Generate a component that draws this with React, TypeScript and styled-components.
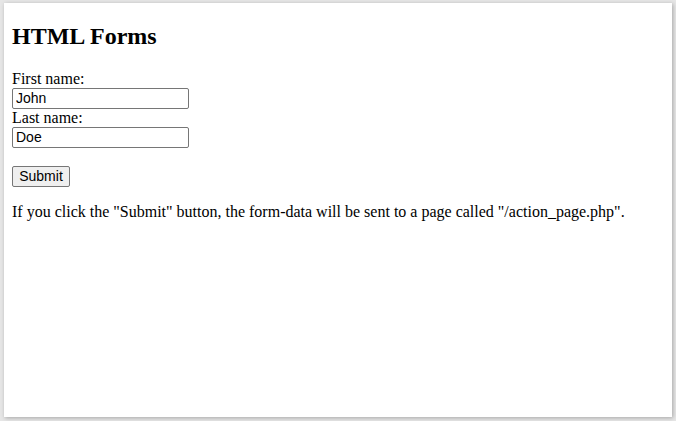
import React from "react";
import styled, { createGlobalStyle } from "styled-components";

const Global = createGlobalStyle`
  html, body { margin: 0; padding: 0; background: #e6e6e6; }
  * { box-sizing: border-box; }
`;

const Page = styled.div`
  width: 676px;
  height: 421px;
  padding: 3px 4px 4px 4px;
  background: #e6e6e6;
`;

const Sheet = styled.div`
  width: 668px;
  height: 414px;
  background: #ffffff;
  box-shadow: 1px 1px 4px rgba(0, 0, 0, 0.28);
  padding: 0 8px;
  overflow: hidden;
  font-family: "Liberation Serif", "Times New Roman", serif;
  font-size: 16px;
  color: #000;
  display: flow-root;
`;

const Title = styled.h2`
  font-size: 24px;
  font-weight: bold;
  margin: 19.92px 0;
`;

const Form = styled.form`
  margin: 0;
`;

const FieldLabel = styled.label``;

const TextInput = styled.input`
  width: 177px;
  height: 21px;
  padding: 1px 3px;
  border: 1px solid #767676;
  border-radius: 2px;
  font-family: "Liberation Sans", Arial, sans-serif;
  font-size: 14px;
  color: #000;
  background: #fff;
  margin: 0;
`;

const SubmitButton = styled.input`
  width: 58px;
  height: 21px;
  padding: 1px 0;
  border: 1px solid #767676;
  border-radius: 2px;
  background: #efefef;
  font-family: "Liberation Sans", Arial, sans-serif;
  font-size: 14px;
  color: #000;
  margin: 0;
  text-align: center;
`;

const Note = styled.p`
  margin: 16px 0;
`;

export default function App() {
  return (
    <>
      <Global />
      <Page>
        <Sheet>
          <Title>HTML Forms</Title>
          <Form onSubmit={(e) => e.preventDefault()}>
            <FieldLabel htmlFor="fname">First name:</FieldLabel>
            <br />
            <TextInput type="text" id="fname" name="fname" defaultValue="John" />
            <br />
            <FieldLabel htmlFor="lname">Last name:</FieldLabel>
            <br />
            <TextInput type="text" id="lname" name="lname" defaultValue="Doe" />
            <br />
            <br />
            <SubmitButton type="submit" value="Submit" />
          </Form>
          <Note>
            If you click the "Submit" button, the form-data will be sent to a page called "/action_page.php".
          </Note>
        </Sheet>
      </Page>
    </>
  );
}
